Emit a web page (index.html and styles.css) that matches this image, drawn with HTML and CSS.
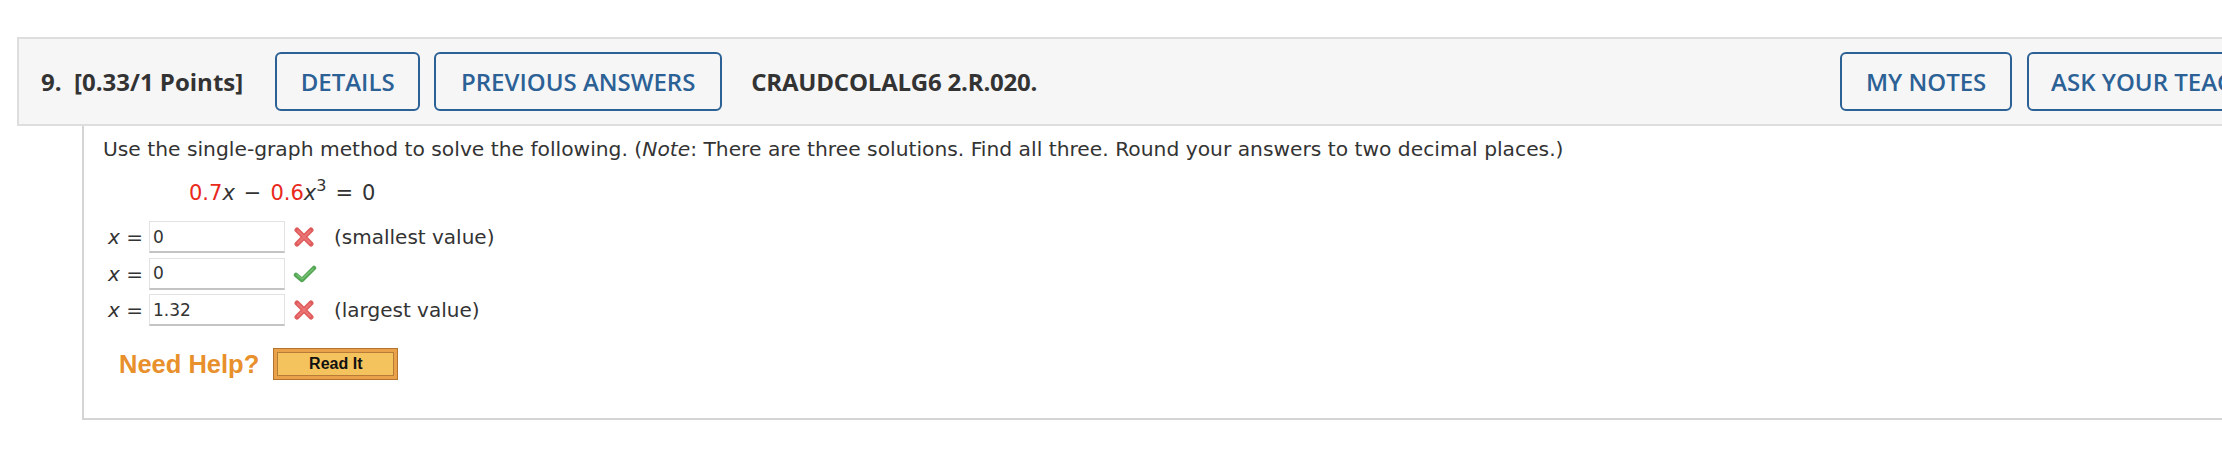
FILE: index.html
```html
<!DOCTYPE html>
<html>
<head>
<meta charset="utf-8">
<link rel="stylesheet" href="styles.css">
</head>
<body>
<div class="page">
  <div class="qhead">
    <span class="points">9.&nbsp; [0.33/1 Points]</span>
    <span class="btn btn-details">DETAILS</span>
    <span class="btn btn-prev">PREVIOUS ANSWERS</span>
    <span class="code">CRAUDCOLALG6 2.R.020.</span>
    <span class="spacer"></span>
    <span class="btn btn-notes">MY NOTES</span>
    <span class="btn btn-ask">ASK YOUR TEACHER</span>
  </div>
  <div class="qbody">
    <p class="prompt">Use the single-graph method to solve the following. (<i>Note</i>: There are three solutions. Find all three. Round your answers to two decimal places.)</p>
    <div class="equation"><span class="red">0.7</span><i>x</i><span class="op">&minus;</span><span class="red">0.6</span><i>x</i><sup>3</sup><span class="op">=</span>0</div>
    <div class="answers">
      <div class="row">
        <span class="var"><i>x</i> =</span>
        <span class="field">0</span>
        <svg class="mark" width="22" height="20" viewBox="0 0 22 20"><path d="M4 3 L18 17 M18 3 L4 17" stroke="#e05c5c" stroke-width="5" stroke-linecap="round"/><path d="M5 4 L17 16 M17 4 L5 16" stroke="#ea7474" stroke-width="2" stroke-linecap="round"/></svg>
        <span class="note">(smallest value)</span>
      </div>
      <div class="row">
        <span class="var"><i>x</i> =</span>
        <span class="field">0</span>
        <svg class="mark" width="24" height="20" viewBox="0 0 24 20"><path d="M3 11 L9 16 L21 4" fill="none" stroke="#55a655" stroke-width="4.5" stroke-linecap="round" stroke-linejoin="round"/><path d="M4 11 L9 15 L20 5" fill="none" stroke="#76c276" stroke-width="1.5" stroke-linecap="round" stroke-linejoin="round"/></svg>
      </div>
      <div class="row">
        <span class="var"><i>x</i> =</span>
        <span class="field">1.32</span>
        <svg class="mark" width="22" height="20" viewBox="0 0 22 20"><path d="M4 3 L18 17 M18 3 L4 17" stroke="#e05c5c" stroke-width="5" stroke-linecap="round"/><path d="M5 4 L17 16 M17 4 L5 16" stroke="#ea7474" stroke-width="2" stroke-linecap="round"/></svg>
        <span class="note">(largest value)</span>
      </div>
    </div>
    <div class="help">
      <span class="need">Need Help?</span>
      <span class="readit"><span class="readit-in">Read It</span></span>
    </div>
  </div>
</div>
</body>
</html>
```

FILE: styles.css
```css
html, body {
  margin: 0;
  padding: 0;
  background: #ffffff;
  overflow: hidden;
}
.page {
  width: 2222px;
  height: 468px;
  overflow: hidden;
  padding-top: 37px;
  box-sizing: border-box;
}
.qhead {
  margin-left: 17px;
  width: 2286px;
  height: 89px;
  box-sizing: border-box;
  background: #f6f6f6;
  border: 2px solid #dedede;
  border-right: none;
  display: flex;
  align-items: center;
  padding-left: 22px;
  font-family: "Open Sans", sans-serif;
  font-size: 24px;
}
.points {
  font-weight: 700;
  color: #333333;
}
.btn {
  height: 59px;
  box-sizing: border-box;
  border: 2.5px solid #2c6196;
  border-radius: 6px;
  color: #2c6196;
  font-weight: 600;
  display: flex;
  align-items: center;
  justify-content: center;
  flex-shrink: 0;
}
.btn-details { width: 145px; margin-left: 32px; }
.btn-prev { width: 288px; margin-left: 14px; }
.btn-notes { width: 172px; }
.btn-ask { padding: 0 22px; margin-left: 15px; }
.code {
  margin-left: 29px;
  font-weight: 700;
  color: #333333;
  letter-spacing: -0.2px;
}
.spacer { flex: 1; }
.qbody {
  margin-left: 82px;
  height: 294px;
  box-sizing: border-box;
  border-left: 2px solid #d4d4d4;
  border-bottom: 2px solid #d4d4d4;
  padding-left: 19px;
  padding-top: 9px;
  font-family: "DejaVu Sans", Verdana, sans-serif;
  color: #333333;
}
.prompt {
  margin: 0;
  font-size: 20.25px;
  line-height: 28px;
}
.equation {
  margin-top: 16px;
  margin-left: 86px;
  font-size: 21px;
  line-height: 28px;
}
.equation .op {
  margin: 0 9px;
}
.equation sup {
  font-size: 16px;
  line-height: 0;
  vertical-align: 9px;
}
.red { color: #e8291c; }
.answers {
  margin-top: 14px;
  display: flex;
  flex-direction: column;
  gap: 4.5px;
}
.row {
  display: flex;
  align-items: center;
  height: 32px;
  font-size: 20px;
}
.var {
  width: 46px;
  padding-left: 5px;
  box-sizing: border-box;
  white-space: nowrap;
}
.field {
  width: 136px;
  height: 32px;
  box-sizing: border-box;
  border: 1px solid #e2e2e2;
  border-bottom: 2px solid #c4c4c4;
  padding-left: 3px;
  display: flex;
  align-items: center;
  background: #ffffff;
  font-size: 17px;
}
.mark {
  margin-left: 8px;
  display: block;
}
.note {
  margin-left: 19px;
}
.help {
  margin-top: 22px;
  margin-left: 16px;
  display: flex;
  align-items: center;
  font-family: "Liberation Sans", Arial, sans-serif;
}
.need {
  color: #e8902c;
  font-weight: 700;
  font-size: 25.5px;
}
.readit {
  margin-left: 14px;
  width: 125px;
  height: 32px;
  box-sizing: border-box;
  border: 1px solid #b3722e;
  background: #eaa24a;
  padding: 3px;
  display: flex;
}
.readit-in {
  flex: 1;
  border: 1px solid #b87c38;
  background: #f4c35e;
  color: #111111;
  font-weight: 700;
  font-size: 16px;
  display: flex;
  align-items: center;
  justify-content: center;
}
```
